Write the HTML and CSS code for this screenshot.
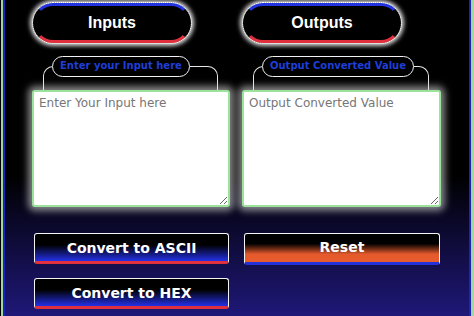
FILE: index.html
```html
<!DOCTYPE html>
<html>
<head>
<meta charset="utf-8">
<link rel="stylesheet" href="styles.css">
</head>
<body>
<div class="frame">
  <div class="grid">
    <div class="col">
      <div class="pill">Inputs</div>
      <fieldset class="bracket"><legend class="tag">Enter your Input here</legend></fieldset>
      <textarea class="box" placeholder="Enter Your Input here"></textarea>
    </div>
    <div class="col">
      <div class="pill">Outputs</div>
      <fieldset class="bracket"><legend class="tag">Output Converted Value</legend></fieldset>
      <textarea class="box" placeholder="Output Converted Value"></textarea>
    </div>
    <div class="col buttons">
      <button class="btn blue">Convert to ASCII</button>
      <button class="btn blue">Convert to HEX</button>
    </div>
    <div class="col buttons">
      <button class="btn orange">Reset</button>
    </div>
  </div>
</div>
</body>
</html>
```
FILE: styles.css
```css
html, body {
  margin: 0;
  padding: 0;
  background: #000;
}
.frame {
  box-sizing: border-box;
  margin-left: 1px;
  width: 473px;
  height: 316px;
  border-left: 2px solid #9fd89f;
  border-right: 3px solid #9fd89f;
  box-shadow: inset 2px 0 0 #1a24b8, inset -2px 0 0 #1a24b8;
  background: linear-gradient(to bottom, #000 0px, #000 175px, #1f1878 316px);
  padding: 3px 0 0 29px;
  overflow: hidden;
}
.grid {
  display: grid;
  grid-template-columns: 198px 199px;
  column-gap: 12px;
}
.col {
  display: flex;
  flex-direction: column;
}
.pill {
  box-sizing: border-box;
  width: 158px;
  height: 40px;
  margin-left: 1px;
  border-radius: 20px;
  border: 3px solid;
  border-color: #2233e0 #000 #e0303e #000;
  outline: 1px dotted #ffffff;
  box-shadow: 0 0 4px 3px rgba(255, 255, 255, 0.85);
  background: #000;
  color: #fff;
  font: bold 16px "Liberation Sans", Arial, sans-serif;
  display: flex;
  align-items: center;
  justify-content: center;
}
.bracket {
  margin: 13px 12px 0 11px;
  padding: 0 0 13px 8px;
  border: 1px solid #e8e8e8;
  border-bottom: none;
  border-radius: 10px 10px 0 0;
  min-width: 0;
}
.tag {
  box-sizing: border-box;
  height: 21px;
  padding: 0 7px;
  border: 1.5px solid #f2f2f2;
  border-radius: 11px;
  background: #000;
  color: #1e3ed8;
  font: bold 10px "DejaVu Sans", Verdana, sans-serif;
  line-height: 18px;
}
.box {
  box-sizing: border-box;
  width: 100%;
  height: 117px;
  margin: 0;
  padding: 4px 5px;
  border: 2px solid #9be39b;
  border-radius: 3px;
  box-shadow: 0 0 7px 4px rgba(220, 220, 220, 0.6);
  background: #fff;
  font: 12px "DejaVu Sans", Verdana, sans-serif;
  color: #333;
  outline: none;
}
.box::placeholder {
  color: #767676;
}
.buttons {
  padding-top: 26px;
  gap: 14px;
}
.btn {
  box-sizing: border-box;
  width: 195px;
  height: 31px;
  margin: 0 0 0 2px;
  padding: 0;
  border: 1px solid #f4f4f4;
  border-radius: 3px;
  color: #fff;
  font: bold 14px "DejaVu Sans", Verdana, sans-serif;
  cursor: pointer;
}
.blue {
  border-bottom: 3px solid #e0303e;
  background: linear-gradient(to bottom, #000 0%, #000 40%, #2430e6 100%);
}
.orange {
  width: 196px;
  height: 32px;
  padding-bottom: 3px;
  border-bottom: 3px solid #2430d8;
  background: linear-gradient(to bottom, #000 0%, #000 35%, #e45a2c 72%, #e85c2c 100%);
}
```
